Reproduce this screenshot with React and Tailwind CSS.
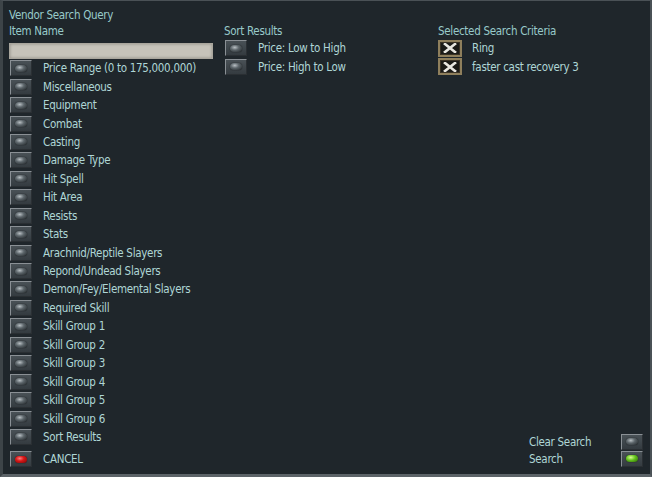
import React from 'react';

const leftItems = [
  'Price Range (0 to 175,000,000)',
  'Miscellaneous',
  'Equipment',
  'Combat',
  'Casting',
  'Damage Type',
  'Hit Spell',
  'Hit Area',
  'Resists',
  'Stats',
  'Arachnid/Reptile Slayers',
  'Repond/Undead Slayers',
  'Demon/Fey/Elemental Slayers',
  'Required Skill',
  'Skill Group 1',
  'Skill Group 2',
  'Skill Group 3',
  'Skill Group 4',
  'Skill Group 5',
  'Skill Group 6',
  'Sort Results',
];

// small bevelled gump button with an oval gem
const GemButton = ({ tone = 'gray' }) => {
  const gem =
    tone === 'red'
      ? 'bg-[radial-gradient(ellipse_at_40%_35%,#ff8080_0%,#d81818_40%,#7a0606_100%)]'
      : tone === 'green'
      ? 'bg-[radial-gradient(ellipse_at_40%_35%,#d8ff90_0%,#62c21c_45%,#2c5f08_100%)]'
      : 'bg-[radial-gradient(ellipse_at_40%_35%,#b9c0c4_0%,#5d666b_40%,#1e2326_100%)]';
  return (
    <div className="w-[22px] h-[16px] shrink-0 border border-t-[#8a9095] border-l-[#8a9095] border-b-[#2a2f33] border-r-[#2a2f33] bg-[linear-gradient(#495156,#343b40)] flex items-center justify-center">
      <div className={`w-[12px] h-[7px] rounded-full ${gem} shadow-[0_0_1px_#000]`} />
    </div>
  );
};

const XButton = () => (
  <div className="w-[24px] h-[17px] shrink-0 border-2 border-[#8f7f5c] bg-[#1b1a17] flex items-center justify-center shadow-[inset_0_0_0_1px_#3a3225]">
    <svg width="14" height="10" viewBox="0 0 14 10">
      <path d="M2 1 L12 9 M12 1 L2 9" stroke="#e8e6e0" strokeWidth="2.6" strokeLinecap="square" />
    </svg>
  </div>
);

export default function App() {
  return (
    <div
      className="w-[652px] h-[477px] bg-[#1f262b] text-[#afd6d6] text-[11.5px] tracking-[-0.3px] leading-[16px] overflow-hidden relative border-t border-t-[#4a5156] border-l-[3px] border-l-[#3d4448] border-r-[2px] border-r-[#4a5156] border-b-[3px] border-b-[#5c6368]"
      style={{ fontFamily: '"DejaVu Sans Condensed", "Open Sans", sans-serif' }}
    >
      <div className="flex h-full pl-[6px] pt-[6px] pb-[5px] pr-[7px]">
        {/* left column */}
        <div className="w-[215px] flex flex-col">
          <div className="text-[#98caca]">Vendor Search Query</div>
          <div className="text-[#98caca]">Item Name</div>
          <div className="mt-[4px] h-[16px] w-[204px] bg-[#c6c3ba] border border-[#a9a69d] shadow-[inset_0_0_3px_#8e8b83]" />
          <div className="flex flex-col">
            {leftItems.map((t) => (
              <div key={t} className="h-[18.45px] flex items-center">
                <div className="pl-[1px]"><GemButton /></div>
                <span className="ml-[11px] whitespace-nowrap">{t}</span>
              </div>
            ))}
            <div className="h-[18.4px] mt-[4px] flex items-center">
              <div className="pl-[1px]"><GemButton tone="red" /></div>
              <span className="ml-[11px]">CANCEL</span>
            </div>
          </div>
        </div>

        {/* sort column */}
        <div className="w-[214px] flex flex-col pt-[16px]">
          <div className="text-[#98caca]">Sort Results</div>
          <div className="flex flex-col">
            <div className="h-[18.4px] flex items-center">
              <div className="pl-[1px]"><GemButton /></div>
              <span className="ml-[11px]">Price: Low to High</span>
            </div>
            <div className="h-[18.4px] flex items-center">
              <div className="pl-[1px]"><GemButton /></div>
              <span className="ml-[11px]">Price: High to Low</span>
            </div>
          </div>
        </div>

        {/* criteria + search */}
        <div className="flex-1 flex flex-col justify-between pt-[16px]">
          <div>
            <div className="text-[#98caca]">Selected Search Criteria</div>
            <div className="h-[18.4px] flex items-center">
              <XButton />
              <span className="ml-[10px]">Ring</span>
            </div>
            <div className="h-[18.4px] flex items-center">
              <XButton />
              <span className="ml-[10px]">faster cast recovery 3</span>
            </div>
          </div>
          <div className="flex flex-col items-end pb-[2px]">
            <div className="h-[17px] flex items-center">
              <span className="w-[92px]">Clear Search</span>
              <GemButton />
            </div>
            <div className="h-[17px] flex items-center">
              <span className="w-[92px]">Search</span>
              <GemButton tone="green" />
            </div>
          </div>
        </div>
      </div>
    </div>
  );
}
